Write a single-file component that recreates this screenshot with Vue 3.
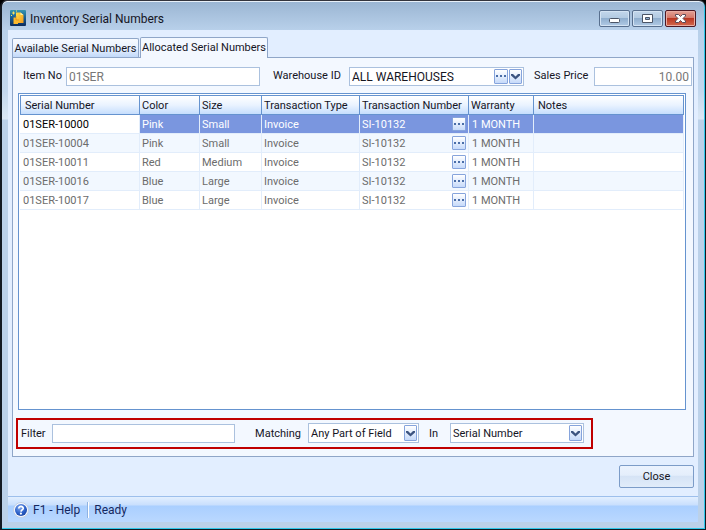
<script setup>
import { ref } from 'vue'

const itemNo = ref('01SER')
const warehouse = ref('ALL WAREHOUSES')
const price = ref('10.00')
const filter = ref('')
const matching = ref('Any Part of Field')
const field = ref('Serial Number')
const selected = ref(0)

const rows = [
  { serial: '01SER-10000', color: 'Pink', size: 'Small' },
  { serial: '01SER-10004', color: 'Pink', size: 'Small' },
  { serial: '01SER-10011', color: 'Red', size: 'Medium' },
  { serial: '01SER-10016', color: 'Blue', size: 'Large' },
  { serial: '01SER-10017', color: 'Blue', size: 'Large' },
].map((r) => ({ ...r, type: 'Invoice', number: 'SI-10132', warranty: '1 MONTH' }))
</script>

<template>
  <div class="window">
    <header class="titlebar">
      <svg class="app-icon" width="16" height="16" viewBox="0 0 16 16" aria-hidden="true">
        <defs>
          <linearGradient id="tile" x1="0" y1="0" x2="0" y2="1">
            <stop offset="0" stop-color="#3796b0" />
            <stop offset="0.5" stop-color="#175c92" />
            <stop offset="1" stop-color="#0b2a5c" />
          </linearGradient>
          <linearGradient id="gold" x1="0" y1="0" x2="1" y2="1">
            <stop offset="0" stop-color="#ffe04a" />
            <stop offset="1" stop-color="#f39a1c" />
          </linearGradient>
        </defs>
        <rect width="16" height="16" rx="1" fill="url(#tile)" />
        <path d="M6 2.500h4.500L13.500 5v8H6z" fill="url(#gold)" />
        <path d="M10.500 2.500V5h3z" fill="#fff0a0" />
        <path d="M3.500 7.500h2L8 10v4H3.500z" fill="#fbb92c" />
        <path d="M6 6v4h3" fill="none" stroke="#d9861a" stroke-width="0.600" />
        <path d="M3.500 1.500v3M2 3h3" stroke="#ffe95c" stroke-width="0.900" />
        <path d="M1 5.500h1M6 1h1" stroke="#ffe95c" />
      </svg>
      <h1>Inventory Serial Numbers</h1>
      <div class="controls">
        <button type="button" aria-label="Minimize">
          <svg width="29" height="15" viewBox="0 0 29 15"><rect x="9.500" y="7.500" width="10" height="4" rx="1" fill="#fff" stroke="#4b5566" /></svg>
        </button>
        <button type="button" aria-label="Maximize">
          <svg width="29" height="15" viewBox="0 0 29 15"><path d="M9.500 3.500h10v8h-10z" fill="#fff" stroke="#4b5566" /><path d="M12.500 6.500h4v2h-4z" fill="#8fadd0" stroke="#4b5566" /></svg>
        </button>
        <button type="button" class="close" aria-label="Close window">
          <svg width="29" height="15" viewBox="0 0 29 15"><path d="M9.500 3.500h3l2 2 2-2h3v1.500l-2.500 2.500 2.500 2.500v1.500h-3l-2-2-2 2h-3V10L12 7.500 9.500 5z" fill="#fff" stroke="#5a4b58" /></svg>
        </button>
      </div>
    </header>

    <div class="client">
      <nav class="tabs" role="tablist">
        <button type="button" role="tab" class="tab" aria-selected="false">Available Serial Numbers</button>
        <button type="button" role="tab" class="tab active" aria-selected="true">Allocated Serial Numbers</button>
      </nav>

      <main class="panel">
        <div class="fields">
          <label for="item">Item No</label>
          <input id="item" v-model="itemNo" class="box muted" readonly />
          <label for="warehouse" class="second">Warehouse ID</label>
          <div class="box combo">
            <input id="warehouse" v-model="warehouse" />
            <button type="button" class="mini" aria-label="Look up warehouse">
              <svg width="12" height="13" viewBox="0 0 12 13"><path d="M1 5h2v2H1zM5 5h2v2H5zM9 5h2v2H9z" fill="#4a6ea8" /></svg>
            </button>
            <button type="button" class="mini" aria-label="Show warehouses">
              <svg width="11" height="13" viewBox="0 0 11 13"><path d="M1 4h2l2.500 2.500L8 4h2v1.500L5.500 9.500 1 5.500z" fill="#3c5480" /></svg>
            </button>
          </div>
          <label for="price" class="third">Sales Price</label>
          <input id="price" v-model="price" class="box muted right" readonly />
        </div>

        <div class="grid">
          <table>
            <colgroup>
              <col class="c-serial" /><col class="c-color" /><col class="c-size" /><col class="c-type" />
              <col class="c-number" /><col class="c-warranty" /><col />
            </colgroup>
            <thead>
              <tr>
                <th>Serial Number</th><th>Color</th><th>Size</th><th>Transaction Type</th>
                <th>Transaction Number</th><th>Warranty</th><th>Notes</th>
              </tr>
            </thead>
            <tbody>
              <tr v-for="(r, i) in rows" :key="r.serial" :class="{ selected: i === selected }" @click="selected = i">
                <td>{{ r.serial }}</td>
                <td>{{ r.color }}</td>
                <td>{{ r.size }}</td>
                <td>{{ r.type }}</td>
                <td>
                  <div class="lookup">
                    <span>{{ r.number }}</span>
                    <button type="button" class="mini" aria-label="Open transaction">
                      <svg width="12" height="12" viewBox="0 0 12 12"><path d="M1 5h2v2H1zM5 5h2v2H5zM9 5h2v2H9z" fill="#4a6ea8" /></svg>
                    </button>
                  </div>
                </td>
                <td>{{ r.warranty }}</td>
                <td></td>
              </tr>
            </tbody>
          </table>
        </div>

        <form class="filter" @submit.prevent>
          <label for="filter">Filter</label>
          <input id="filter" v-model="filter" class="box" />
          <label for="matching" class="matching">Matching</label>
          <div class="select">
            <select id="matching" v-model="matching">
              <option>Any Part of Field</option>
              <option>Start of Field</option>
            </select>
            <span class="mini arrow">
              <svg width="11" height="12" viewBox="0 0 11 12"><path d="M1 4h2l2.500 2.500L8 4h2v1.500L5.500 9.500 1 5.500z" fill="#3c5480" /></svg>
            </span>
          </div>
          <label for="field" class="in">In</label>
          <div class="select">
            <select id="field" v-model="field">
              <option>Serial Number</option>
              <option>Color</option>
              <option>Size</option>
            </select>
            <span class="mini arrow">
              <svg width="11" height="12" viewBox="0 0 11 12"><path d="M1 4h2l2.500 2.500L8 4h2v1.500L5.500 9.500 1 5.500z" fill="#3c5480" /></svg>
            </span>
          </div>
        </form>
      </main>

      <div class="actions">
        <button type="button" class="push">Close</button>
      </div>

      <footer class="status">
        <svg width="16" height="16" viewBox="0 0 16 16" aria-hidden="true">
          <defs>
            <radialGradient id="ball" cx="0.4" cy="0.3" r="0.8">
              <stop offset="0" stop-color="#7fa8ee" />
              <stop offset="0.6" stop-color="#2b5fc8" />
              <stop offset="1" stop-color="#163e98" />
            </radialGradient>
          </defs>
          <circle cx="8" cy="8" r="7.500" fill="#f4f8ff" stroke="#c3cfe2" />
          <circle cx="8" cy="8" r="6" fill="url(#ball)" />
          <path d="M5.800 6.500C5.800 3.700 10.300 3.900 10.200 6.400 10.100 7.900 8.200 7.900 8 9.600" fill="none" stroke="#fff" stroke-width="1.700" />
          <circle cx="7.900" cy="11.600" r="1.100" fill="#fff" />
        </svg>
        <span class="help">F1 - Help</span>
        <span class="ready">Ready</span>
      </footer>
    </div>
  </div>
</template>

<style>
body {
  margin: 0;
  background: #000;
}
</style>

<style scoped>
.window {
  box-sizing: border-box;
  min-height: 100vh;
  display: flex;
  flex-direction: column;
  padding: 0 6px 7px;
  border: 1px solid #141a22;
  border-top-color: #33343c;
  border-left-width: 2px;
  border-radius: 7px 7px 0 0;
  background: linear-gradient(#9ab5d2, #b8d0ea 29px, #c3d8ee 90px, #dbe8f5 118px, #bbd1e9 119px);
  box-shadow: inset -1px -1px 0 #2fc8ea, inset 0 1px 0 #e8f0f8;
  font-family: Roboto, "Open Sans", sans-serif;
  font-size: 11px;
  line-height: 13px;
  color: #15151f;
}
button,
input,
select {
  box-sizing: border-box;
  margin: 0;
  font: inherit;
  color: inherit;
}
.titlebar {
  display: flex;
  gap: 4px;
  height: 29px;
  padding-left: 2px;
}
.app-icon {
  margin-top: 9px;
}
h1 {
  flex: 1;
  margin: 0;
  padding-top: 10px;
  font-size: 12px;
  font-weight: 400;
  line-height: 16px;
}
.controls {
  display: flex;
  gap: 2px;
  padding: 9px 3px 0 0;
}
.controls button {
  display: flex;
  width: 31px;
  height: 17px;
  padding: 0;
  border: 1px solid #586f8e;
  border-radius: 2px;
  background: linear-gradient(#c3d7eb, #b2cae2 46%, #8eadcd 47%, #b1cae5);
  box-shadow: inset 0 0 0 1px #d3e3f3;
}
.controls .close {
  border-color: #4d1823;
  background: linear-gradient(#e3a196, #d47768 46%, #b93420 47%, #d36a4e);
  box-shadow: inset 0 0 0 1px #e9aca2;
}
.client {
  flex: 1;
  display: flex;
  flex-direction: column;
  margin-right: 1px;
  background: #e2eeff;
}
.tabs {
  display: flex;
  align-items: flex-end;
  gap: 1px;
  height: 27px;
  padding: 0 4px;
}
.tab {
  height: 19px;
  width: 127px;
  padding: 0;
  border: 1px solid #8fa6c8;
  border-bottom: 0;
  border-radius: 2px 2px 0 0;
  background: linear-gradient(#f7faff, #e8f1fe 50%, #c2d9f9);
  text-align: center;
  white-space: nowrap;
}
.tab.active {
  position: relative;
  z-index: 1;
  height: 21px;
  width: 128px;
  margin-bottom: -1px;
  padding-bottom: 1px;
  background: #f3f8ff;
}
.panel {
  flex: 1;
  display: flex;
  flex-direction: column;
  margin: 0 4px;
  border: 1px solid #8fa6c8;
  background: #f3f8ff;
}
.fields {
  display: grid;
  grid-template-columns: 43px 194fr 89px 175fr 70px 98fr;
  padding: 9px 1px 7px 10px;
}
.fields label {
  padding-top: 2px;
}
.fields .second {
  padding-left: 13px;
}
.fields .third {
  padding-left: 10px;
}
.box {
  min-width: 0;
  width: 100%;
  height: 19px;
  padding: 1px 2px 0;
  border: 1px solid #abc1de;
  border-radius: 0;
  outline: 0;
  background: #fff;
  font-size: 12px;
}
.muted {
  color: #777;
}
.combo {
  display: flex;
  align-items: center;
  gap: 1px;
  padding: 0 1px 0 0;
  box-sizing: border-box;
}
.combo input {
  flex: 1;
  min-width: 0;
  padding: 1px 2px 0;
  border: 0;
  outline: 0;
  background: none;
}
.right {
  text-align: right;
}
.mini {
  flex: none;
  display: flex;
  padding: 0;
  border: 1px solid #86a4dc;
  border-radius: 1px;
  background: linear-gradient(#fff, #c6dafa);
}
.grid {
  flex: 1;
  margin: 0 7px 0 5px;
  padding: 1px;
  border: 1px solid #6593cf;
  background: #fff;
}
table {
  width: 100%;
  table-layout: fixed;
  border-collapse: separate;
  border-spacing: 0;
}
.c-serial { width: 120px; }
.c-color { width: 60px; }
.c-size { width: 62px; }
.c-type { width: 98px; }
.c-number { width: 109px; }
.c-warranty { width: 65px; }
th {
  height: 18px;
  padding: 0 2px;
  border: solid #6593cf;
  border-width: 1px 1px 1px 0;
  background: linear-gradient(#fff, #eaf3ff 50%, #c6defd);
  font-weight: 400;
  text-align: left;
  white-space: nowrap;
}
th:first-child {
  padding-left: 4px;
  border-left-width: 1px;
}
th:last-child,
td:last-child {
  padding-left: 4px;
}
td {
  height: 18px;
  padding: 0 2px;
  border: solid #e2edfb;
  border-width: 0 1px 1px 0;
  color: #6c6c6c;
  white-space: nowrap;
}
td:first-child {
  padding-left: 3px;
}
tbody tr:nth-child(even) {
  background: #f2f8ff;
}
.selected td {
  background: #7a96df;
  color: #fff;
}
.selected td:first-child {
  background: #fff;
  color: #000;
}
.lookup {
  display: flex;
  align-items: center;
  justify-content: space-between;
}
td:nth-child(6) {
  padding-left: 3px;
}
.filter {
  display: grid;
  grid-template-columns: 31px 183fr 73px 111fr 31px 134fr;
  align-items: center;
  margin: 8px 100px 7px 3px;
  padding: 3px 7px 4px 3px;
  border: 2px solid #c00000;
}
.matching {
  padding-right: 7px;
  text-align: right;
}
.in {
  padding-left: 10px;
}
.select {
  position: relative;
}
select {
  display: block;
  width: 100%;
  height: 20px;
  padding: 0 20px 0 2px;
  border: 1px solid #abc1de;
  border-radius: 0;
  outline: 0;
  appearance: none;
  background: #fff;
}
.arrow {
  position: absolute;
  top: 2px;
  right: 2px;
  height: 14px;
  align-items: center;
  pointer-events: none;
}
.actions {
  display: flex;
  justify-content: flex-end;
  padding: 8px 4px;
}
.push {
  width: 75px;
  height: 23px;
  padding: 0;
  border: 1px solid #7c9cc8;
  border-radius: 2px;
  background: linear-gradient(#ebf3fe, #e4eefb 45%, #d5e3f5 46%, #e1ecfa);
}
.status {
  display: flex;
  align-items: center;
  height: 25px;
  padding-left: 5px;
  border-top: 1px solid #9dbfec;
  background: linear-gradient(#e2efff, #c9dffd 8px, #aacfff 9px, #bad8ff);
  color: #15285f;
  font-size: 12px;
  line-height: 16px;
}
.help {
  margin-left: 4px;
  padding-right: 7px;
  border-right: 1px solid #8fb3e2;
}
.ready {
  padding-left: 5px;
  border-left: 1px solid #fff;
}
</style>
